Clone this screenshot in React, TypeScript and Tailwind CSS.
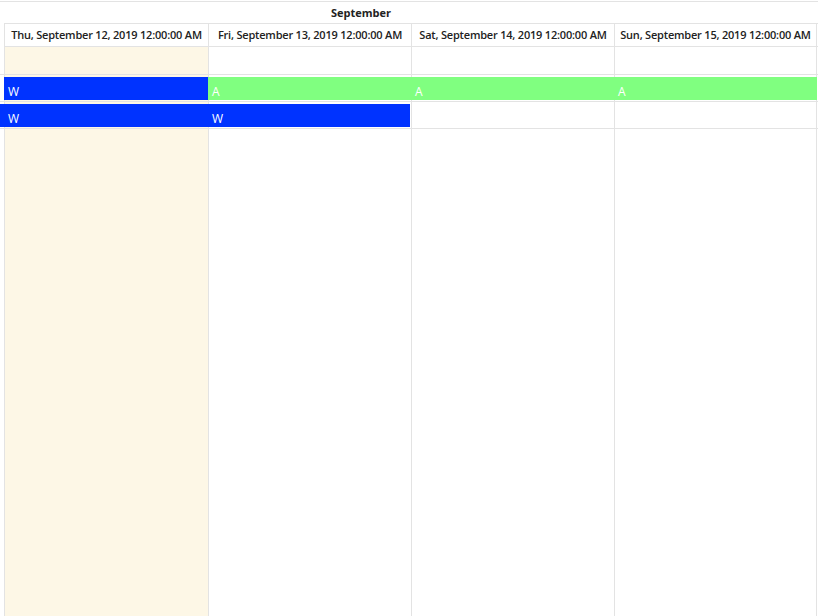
const days = [
  "Thu, September 12, 2019 12:00:00 AM",
  "Fri, September 13, 2019 12:00:00 AM",
  "Sat, September 14, 2019 12:00:00 AM",
  "Sun, September 15, 2019 12:00:00 AM",
]

const font = { fontFamily: '"Open Sans", "Liberation Sans", sans-serif' }

export default function App() {
  return (
    <div className="w-[818px] h-[616px] overflow-hidden bg-white text-[#222]" style={font}>
      <div className="mt-px border-t border-[#e3e3e3] h-[22px] flex items-center pt-[2px]">
        <span className="ml-[331px] text-[11px] font-bold">September</span>
      </div>
      <div className="ml-[4px] w-[814px] flex border-y border-[#e3e3e3] h-[24px]">
        {days.map((d, i) => (
          <div
            key={d}
            className={`${i === 0 ? "w-[204px]" : "w-[203px]"} border-l border-[#e3e3e3] last:border-r flex items-center justify-center text-[11px] font-semibold tracking-[-0.2px] whitespace-nowrap`}
          >
            {d}
          </div>
        ))}
      </div>
      <div className="relative h-[570px]">
        <div className="absolute inset-y-0 left-[4px] w-[814px] flex">
          <div className="w-[204px] border-l border-[#e3e3e3] bg-[#fdf7e6]" />
          <div className="w-[203px] border-l border-[#e3e3e3]" />
          <div className="w-[203px] border-l border-[#e3e3e3]" />
          <div className="w-[203px] border-l border-r border-[#e3e3e3]" />
        </div>
        <div className="relative">
          <div className="h-[28px] border-b border-[#e3e3e3]" />
          <div className="h-[27px] border-b border-[#e3e3e3] pt-[2px]">
            <div className="flex h-[23px] ml-[4px] text-white text-[12px]">
              <div className="w-[204px] bg-[#0033ff] pl-[4px] pt-[6px]">W</div>
              <div className="w-[609px] bg-[#80ff80] flex">
                <div className="w-[203px] pl-[4px] pt-[6px]">A</div>
                <div className="w-[203px] pl-[4px] pt-[6px]">A</div>
                <div className="w-[203px] pl-[4px] pt-[6px]">A</div>
              </div>
            </div>
          </div>
          <div className="h-[27px] border-b border-[#e3e3e3] pt-[2px]">
            <div className="flex h-[23px] w-[410px] bg-[#0033ff] text-white text-[12px]">
              <div className="w-[208px] pl-[8px] pt-[6px]">W</div>
              <div className="pl-[4px] pt-[6px]">W</div>
            </div>
          </div>
        </div>
      </div>
    </div>
  )
}
